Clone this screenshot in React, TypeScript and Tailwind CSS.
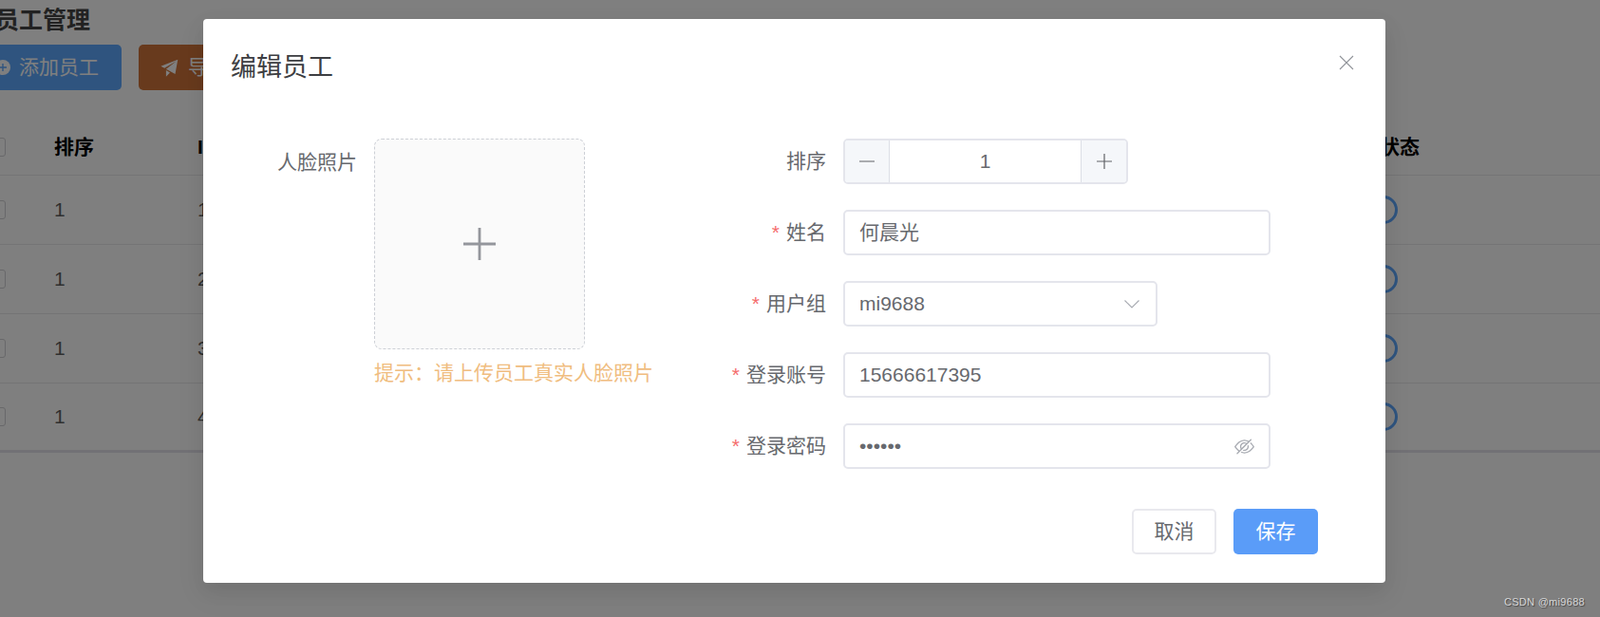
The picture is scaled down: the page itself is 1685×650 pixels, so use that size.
import React from "react";

const font = "[font-family:'Liberation_Sans','Noto_Sans_CJK_SC',sans-serif]";

function Field({ label, required, children }: { label: string; required?: boolean; children: React.ReactNode }) {
  return (
    <div className="flex items-center mb-[27px] h-[48px]">
      <label className="w-[158px] shrink-0 pr-[18px] text-right text-[21px] text-[#67696e] whitespace-nowrap">
        {required && <span className="text-[#f56c6c] mr-[7px]">*</span>}
        {label}
      </label>
      {children}
    </div>
  );
}

function TextInput({ value, type = "text", className = "w-[450px]", children }: { value: string; type?: string; className?: string; children?: React.ReactNode }) {
  return (
    <div className={`flex items-center h-[48px] rounded-[5px] border-2 border-[#e4e5ec] bg-white pl-[15px] pr-[15px] ${className}`}>
      <input readOnly type={type} value={value} className="min-w-0 flex-1 bg-transparent text-[21px] text-[#67696e] outline-none" />
      {children}
    </div>
  );
}

function TableRow({ id }: { id: number }) {
  return (
    <div className="flex items-center h-[73px] border-b border-[#e8e8ea] last:border-b-[3px] last:border-[#e4e2ea]">
      <span className="ml-[-14px] h-[20px] w-[20px] rounded-[3px] border border-[#d0d0d4]" />
      <span className="ml-[51px] w-[151px] text-[21px] text-[#606060]">1</span>
      <span className="text-[21px] text-[#606060]">{id}</span>
      <span className="ml-auto mr-[213px] h-[30px] w-[30px] rounded-full border-[3px] border-[#5ea8ff]" />
    </div>
  );
}

export default function App() {
  return (
    <div className={`relative h-[650px] overflow-hidden bg-white ${font}`}>
      <div className="pt-[3px]">
        <h1 className="ml-[-5px] text-[25px] font-bold leading-[36px] text-[#444]">员工管理</h1>
        <div className="mt-[8px] flex gap-[18px]">
          <button className="ml-[-20px] flex h-[48px] w-[148px] items-center rounded-[5px] bg-[#5ea8ff] pl-[15px] text-[21px] text-white">
            <svg viewBox="0 0 16 16" className="mr-[9px] h-[16px] w-[16px]">
              <circle cx="8" cy="8" r="8" fill="#fff" />
              <path d="M8 4v8M4 8h8" stroke="#5ea8ff" strokeWidth="1.4" />
            </svg>
            添加员工
          </button>
          <button className="flex h-[48px] w-[148px] items-center rounded-[5px] bg-[#d0743a] pl-[22px] text-[21px] text-white">
            <svg viewBox="0 0 1024 1024" className="mr-[8px] h-[22px] w-[22px]" fill="#fff">
              <path d="m64 448 832-320-128 704-446.08-243.328L832 192 242.816 545.472 64 448zm256 512V657.024L512 768 320 960z" />
            </svg>
            导出数据
          </button>
        </div>
        <div className="mt-[30px] flex h-[60px] items-center border-b border-[#e8e8ea]">
          <span className="ml-[-14px] h-[20px] w-[20px] rounded-[3px] border border-[#d0d0d4]" />
          <span className="ml-[51px] w-[151px] text-[21px] font-bold text-black">排序</span>
          <span className="text-[21px] font-bold text-black">ID</span>
          <span className="ml-auto mr-[190px] text-[21px] font-bold text-black">状态</span>
        </div>
        {[1, 2, 3, 4].map((id) => (
          <TableRow key={id} id={id} />
        ))}
      </div>

      <div className="absolute inset-0 bg-black/50" />

      <div className="absolute left-[214px] top-[20px] h-[594px] w-[1245px] rounded-[4px] bg-white shadow-[0_12px_32px_4px_rgba(0,0,0,0.04),0_8px_20px_rgba(0,0,0,0.08)]">
        <div className="flex h-[126px] items-start justify-between pl-[29px] pr-[33px] pt-[31px]">
          <h2 className="text-[27px] leading-[40px] text-[#3d3e42]">编辑员工</h2>
          <svg viewBox="0 0 16 16" className="mt-[7px] h-[16px] w-[16px]" fill="none" stroke="#909399" strokeWidth="1.1">
            <path d="M1 1l14 14M15 1L1 15" />
          </svg>
        </div>
        <div className="flex">
          <div className="flex w-[516px] shrink-0">
            <label className="w-[180px] shrink-0 pr-[18px] pt-[10px] text-right text-[21px] leading-[30px] text-[#67696e]">人脸照片</label>
            <div>
              <div className="flex h-[222px] w-[222px] items-center justify-center rounded-[8px] border border-dashed border-[#cdd0d6] bg-[#fafafa]">
                <svg viewBox="0 0 34 34" className="h-[34px] w-[34px]" stroke="#94969c" strokeWidth="2.8">
                  <path d="M17 0v34M0 17h34" />
                </svg>
              </div>
              <p className="mt-[9px] whitespace-nowrap text-[21px] leading-[32px] text-[#f0bd7f]">提示：请上传员工真实人脸照片</p>
            </div>
          </div>
          <div>
            <Field label="排序">
              <div className="flex h-[48px] w-[300px] items-stretch overflow-hidden rounded-[5px] border-2 border-[#e4e5ec]">
                <span className="flex w-[47px] items-center justify-center border-r border-[#dcdfe6] bg-[#f5f7fa]">
                  <svg viewBox="0 0 16 16" className="h-[16px] w-[16px]" stroke="#606266" strokeWidth="1.2"><path d="M0 8h16" /></svg>
                </span>
                <span className="flex flex-1 items-center justify-center text-[21px] text-[#67696e]">1</span>
                <span className="flex w-[48px] items-center justify-center border-l border-[#dcdfe6] bg-[#f5f7fa]">
                  <svg viewBox="0 0 16 16" className="h-[16px] w-[16px]" stroke="#606266" strokeWidth="1.2"><path d="M0 8h16M8 0v16" /></svg>
                </span>
              </div>
            </Field>
            <Field label="姓名" required>
              <TextInput value="何晨光" />
            </Field>
            <Field label="用户组" required>
              <TextInput value="mi9688" className="w-[331px]">
                <svg viewBox="0 0 16 9" className="mr-[2px] h-[9px] w-[16px]" fill="none" stroke="#a8abb2" strokeWidth="1.2">
                  <path d="M.5.5L8 8l7.5-7.5" />
                </svg>
              </TextInput>
            </Field>
            <Field label="登录账号" required>
              <TextInput value="15666617395" />
            </Field>
            <Field label="登录密码" required>
              <TextInput value="123456" type="password">
                <svg viewBox="0 0 1024 1024" className="h-[21px] w-[21px]" fill="#a8abb2">
                  <path d="M876.8 156.8c0-9.6-3.2-16-9.6-22.4-6.4-6.4-12.8-9.6-22.4-9.6-9.6 0-16 3.2-22.4 9.6L736 220.8c-64-32-137.6-51.2-224-60.8-160 16-288 73.6-377.6 176C44.8 438.4 0 496 0 512s48 73.6 134.4 176c22.4 25.6 44.8 48 73.6 67.2l-86.4 89.6c-6.4 6.4-9.6 12.8-9.6 22.4 0 9.6 3.2 16 9.6 22.4 6.4 6.4 12.8 9.6 22.4 9.6 9.6 0 16-3.2 22.4-9.6l704-710.4c3.2-6.4 6.4-12.8 6.4-22.4Zm-646.4 528c-76.8-70.4-128-128-153.6-172.8 28.8-48 80-105.6 153.6-172.8C304 272 400 230.4 512 224c64 3.2 124.8 19.2 176 44.8l-54.4 54.4C598.4 300.8 560 288 512 288c-64 0-115.2 22.4-160 64s-64 96-64 160c0 48 12.8 89.6 35.2 124.8L256 707.2c-9.6-6.4-19.2-16-25.6-22.4Zm140.8-96c-12.8-22.4-19.2-48-19.2-76.8 0-44.8 16-83.2 48-112 32-28.8 67.2-48 112-48 28.8 0 54.4 6.4 73.6 19.2L371.2 588.8ZM889.6 336c-12.8-16-28.8-28.8-41.6-41.6l-48 48c73.6 67.2 124.8 124.8 150.4 169.6-28.8 48-80 105.6-153.6 172.8-73.6 67.2-172.8 108.8-284.8 115.2-51.2-3.2-99.2-12.8-140.8-28.8l-48 48c57.6 22.4 118.4 38.4 188.8 44.8 160-16 288-73.6 377.6-176C979.2 585.6 1024 528 1024 512s-48-73.6-134.4-176Z" />
                  <path d="M511.998 672c-12.8 0-25.6-3.2-38.4-6.4l-51.2 51.2c28.8 12.8 57.6 19.2 89.6 19.2 64 0 115.2-22.4 160-64 41.6-41.6 64-96 64-160 0-32-6.4-64-19.2-89.6l-51.2 51.2c3.2 12.8 6.4 25.6 6.4 38.4 0 44.8-16 83.2-48 112-32 28.8-67.2 48-112 48Z" />
                </svg>
              </TextInput>
            </Field>
          </div>
        </div>
        <div className="mt-[15px] flex justify-end gap-[18px] pr-[71px]">
          <button className="h-[48px] w-[89px] rounded-[5px] border-2 border-[#e9e9ee] bg-white text-[21px] text-[#67696e]">取消</button>
          <button className="h-[48px] w-[89px] rounded-[5px] bg-[#5a9cf8] text-[21px] text-white">保存</button>
        </div>
      </div>

      <span className="absolute bottom-[8px] right-[16px] text-[11px] tracking-[0.3px] text-[#d8d8d8] [text-shadow:1px_1px_1px_#444]">CSDN @mi9688</span>
    </div>
  );
}
